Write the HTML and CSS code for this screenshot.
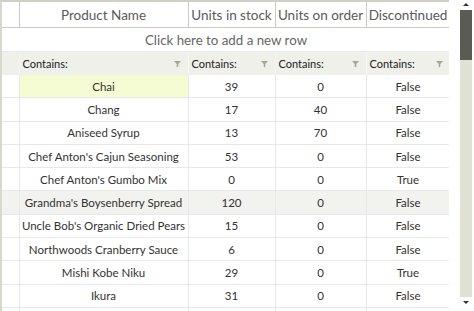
FILE: index.html
```html
<!DOCTYPE html>
<html>
<head>
<meta charset="utf-8">
<link rel="stylesheet" href="styles.css">
</head>
<body>
<div class="grid">
  <div class="table-area">
    <table class="data">
      <colgroup>
        <col class="c-ind"><col class="c-name"><col class="c-stock"><col class="c-order"><col class="c-disc">
      </colgroup>
      <thead>
        <tr class="head">
          <th class="ind"></th>
          <th>Product Name</th>
          <th>Units in stock</th>
          <th>Units on order</th>
          <th>Discontinued</th>
        </tr>
      </thead>
      <tbody>
        <tr class="newrow"><td colspan="5">Click here to add a new row</td></tr>
        <tr class="filter">
          <td class="ind"></td>
          <td><div class="fcell"><span>Contains:</span><svg class="funnel" width="7" height="6" viewBox="0 0 7 6"><path d="M0 0H7L4.3 3V6H2.7V3Z"/></svg></div></td>
          <td><div class="fcell"><span>Contains:</span><svg class="funnel" width="7" height="6" viewBox="0 0 7 6"><path d="M0 0H7L4.3 3V6H2.7V3Z"/></svg></div></td>
          <td><div class="fcell"><span>Contains:</span><svg class="funnel" width="7" height="6" viewBox="0 0 7 6"><path d="M0 0H7L4.3 3V6H2.7V3Z"/></svg></div></td>
          <td><div class="fcell"><span>Contains:</span><svg class="funnel" width="7" height="6" viewBox="0 0 7 6"><path d="M0 0H7L4.3 3V6H2.7V3Z"/></svg></div></td>
        </tr>
        <tr class="row"><td class="ind"></td><td class="current">Chai</td><td>39</td><td>0</td><td>False</td></tr>
        <tr class="row"><td class="ind"></td><td>Chang</td><td>17</td><td>40</td><td>False</td></tr>
        <tr class="row"><td class="ind"></td><td>Aniseed Syrup</td><td>13</td><td>70</td><td>False</td></tr>
        <tr class="row"><td class="ind"></td><td>Chef Anton's Cajun Seasoning</td><td>53</td><td>0</td><td>False</td></tr>
        <tr class="row"><td class="ind"></td><td>Chef Anton's Gumbo Mix</td><td>0</td><td>0</td><td>True</td></tr>
        <tr class="row hover"><td class="ind"></td><td>Grandma's Boysenberry Spread</td><td>120</td><td>0</td><td>False</td></tr>
        <tr class="row"><td class="ind"></td><td>Uncle Bob's Organic Dried Pears</td><td>15</td><td>0</td><td>False</td></tr>
        <tr class="row"><td class="ind"></td><td>Northwoods Cranberry Sauce</td><td>6</td><td>0</td><td>False</td></tr>
        <tr class="row"><td class="ind"></td><td>Mishi Kobe Niku</td><td>29</td><td>0</td><td>True</td></tr>
        <tr class="row"><td class="ind"></td><td>Ikura</td><td>31</td><td>0</td><td>False</td></tr>
        <tr class="row"><td class="ind"></td><td></td><td></td><td></td><td></td></tr>
      </tbody>
    </table>
  </div>
  <div class="scrollbar">
    <div class="arrow up"></div>
    <div class="track">
      <div class="thumb"></div>
    </div>
    <div class="arrow down"></div>
  </div>
</div>
</body>
</html>
```
FILE: styles.css
```css
html, body {
  margin: 0;
  padding: 0;
  background: #ffffff;
  overflow: hidden;
}
body {
  width: 474px;
  height: 311px;
  font-family: Lato, "Noto Sans", sans-serif;
  color: #333333;
}
.grid {
  display: flex;
  height: 311px;
}
.table-area {
  width: 447px;
  height: 309px;
  border-top: 2px solid #cfd0c4;
  border-left: 2px solid #d8d8cc;
  overflow: hidden;
}
.data {
  border-collapse: collapse;
  table-layout: fixed;
  width: 448px;
}
.c-ind { width: 17px; }
.c-name { width: 169px; }
.c-stock { width: 87px; }
.c-order { width: 91px; }
.c-disc { width: 84px; }

.data td, .data th {
  padding: 0;
  text-align: center;
  white-space: nowrap;
  overflow: hidden;
}
.head th {
  height: 25px;
  font-weight: normal;
  font-size: 13.5px;
  color: #5a5a5a;
  border: 1px solid #cdcdbe;
  border-top: 0;
  background: #ffffff;
}
.head th.ind {
  border-left: 0;
}
.newrow td {
  height: 23px;
  font-size: 13.3px;
  color: #666666;
  border-bottom: 1px solid #ececea;
}
.filter td {
  height: 23px;
  background: #f0f0ea;
  border-right: 1px solid #f7f7f3;
  font-size: 11px;
  color: #222222;
}
.fcell {
  display: flex;
  align-items: center;
  justify-content: space-between;
  padding: 0 7px 0 3px;
}
.funnel {
  fill: #a5a790;
}
.row td {
  height: 22.3px;
  font-size: 11.5px;
  color: #333333;
  border-bottom: 1px solid #e8e8e8;
  border-right: 1px solid #e8e8e8;
}
.row td.current {
  background: #f5fbd2;
}
.row.hover td {
  background: #f2f2ee;
}
.scrollbar {
  margin-left: 11px;
  width: 12px;
  display: flex;
  flex-direction: column;
  align-items: center;
}
.arrow {
  width: 0;
  height: 0;
  border-left: 3px solid transparent;
  border-right: 3px solid transparent;
}
.arrow.up {
  margin-top: 3px;
  border-bottom: 3px solid #333333;
}
.arrow.down {
  margin-top: 4px;
  border-top: 3px solid #333333;
}
.track {
  margin-top: 4px;
  width: 12px;
  height: 287px;
  background: #e0e1d2;
}
.thumb {
  height: 50px;
  background: #5a5b53;
}
```
